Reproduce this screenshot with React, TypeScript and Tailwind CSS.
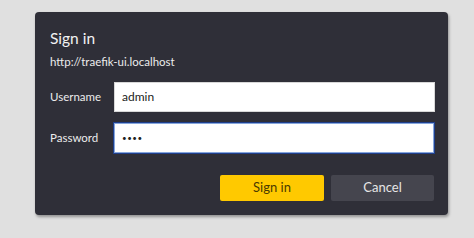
import React from "react";

const font = { fontFamily: "Lato, 'Noto Sans', sans-serif" };

export default function App() {
  return (
    <div className="w-[474px] h-[238px] bg-[#e0e0e0] pt-[12px] pl-[35px]" style={font}>
      <div className="w-[413px] h-[203px] rounded-[4px] bg-[#2f2f38] shadow-[1px_2px_3px_rgba(0,0,0,0.35)] pl-[15px] pr-[13px] pt-[16px] flex flex-col">
        {/* ── Título ─────────────────────────────────────────── */}
        <h1 className="text-[15.5px] leading-[20px] text-[#f2f2f2] font-normal">Sign in</h1>
        <p className="mt-[6px] text-[11.5px] leading-[16px] text-[#ececec]">http://traefik-ui.localhost</p>

        {/* ── Campos ─────────────────────────────────────────── */}
        <div className="mt-[12px] flex items-center h-[30px]">
          <label className="w-[64px] text-[11.5px] text-[#ececec]">Username</label>
          <div className="flex-1 h-full bg-white border border-[#d8d8d8] flex items-center px-[7px] text-[12px] text-[#222]">
            admin
          </div>
        </div>
        <div className="mt-[10px] flex items-center h-[32px]">
          <label className="w-[63px] text-[11.5px] text-[#ececec]">Password</label>
          <div className="flex-1 h-full bg-white border border-[#1f3f8c] shadow-[inset_0_0_0_1px_#86a6dc] flex items-center px-[8px] text-[8px] tracking-[0.5px] text-[#222]">
            ••••
          </div>
        </div>

        {/* ── Botões ─────────────────────────────────────────── */}
        <div className="mt-[21px] flex justify-end gap-[7px] pr-[1px]">
          <button className="w-[104px] h-[26px] rounded-[2px] bg-[#ffc900] text-[#4a3a00] text-[13px]">Sign in</button>
          <button className="w-[103px] h-[26px] rounded-[2px] bg-[#45454e] text-[#e6e6e6] text-[13px]">Cancel</button>
        </div>
      </div>
    </div>
  );
}
